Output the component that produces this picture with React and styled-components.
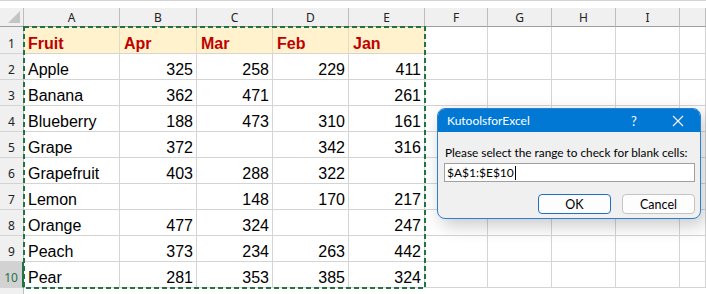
import React from "react";
import styled, { createGlobalStyle } from "styled-components";

const GlobalStyle = createGlobalStyle`
  html, body { margin: 0; padding: 0; background: #fff; }
  body { font-family: "Liberation Sans", Arial, sans-serif; overflow: hidden; }
`;

const COLS = [96, 77, 76, 76, 76, 63, 64, 64, 64];
const LETTERS = ["A", "B", "C", "D", "E", "F", "G", "H", "I"];

const DATA = [
  ["Apple", 325, 258, 229, 411],
  ["Banana", 362, 471, "", 261],
  ["Blueberry", 188, 473, 310, 161],
  ["Grape", 372, "", 342, 316],
  ["Grapefruit", 403, 288, 322, ""],
  ["Lemon", "", 148, 170, 217],
  ["Orange", 477, 324, "", 247],
  ["Peach", 373, 234, 263, 442],
  ["Pear", 281, 353, 385, 324],
];

const Screen = styled.div`
  position: relative;
  width: 706px;
  height: 294px;
  overflow: hidden;
  background: #fff;
`;

const TopStrip = styled.div`
  height: 8px;
  border-top: 1px solid #d4d4d4;
  box-sizing: border-box;
  background: #fff;
`;

const Grid = styled.div`
  position: relative;
  display: grid;
  grid-template-columns: 24px ${COLS.map((w) => w + "px").join(" ")} 1fr;
  grid-template-rows: 19px 27px repeat(9, 26px) 1fr;
  height: 286px;
`;

const Corner = styled.div`
  background: #f0f0f0;
  border-right: 1px solid #bdbdbd;
  border-bottom: 1px solid #9e9e9e;
  box-sizing: border-box;
  position: relative;
  &::after {
    content: "";
    position: absolute;
    right: 3px;
    bottom: 3px;
    border-style: solid;
    border-width: 0 0 12px 12px;
    border-color: transparent transparent #c4c4c4 transparent;
  }
`;

const ColHead = styled.div`
  background: #f0f0f0;
  border-right: 1px solid #bdbdbd;
  border-bottom: 1px solid #9e9e9e;
  box-sizing: border-box;
  display: flex;
  align-items: center;
  justify-content: center;
  font-family: "Noto Sans", "Liberation Sans", sans-serif;
  font-size: 12px;
  color: #222;
`;

const RowHead = styled.div`
  background: ${(p) => (p.$active ? "#d2d2d2" : "#f0f0f0")};
  border-right: ${(p) => (p.$active ? "2px solid #217346" : "1px solid #bdbdbd")};
  border-bottom: 1px solid #d4d4d4;
  box-sizing: border-box;
  display: flex;
  align-items: flex-end;
  justify-content: center;
  padding-bottom: 1px;
  font-family: "Noto Sans", "Liberation Sans", sans-serif;
  font-size: 12px;
  color: ${(p) => (p.$active ? "#217346" : "#222")};
`;

const Cell = styled.div`
  background: ${(p) => (p.$head ? "#fff2cc" : "#fff")};
  border-right: 1px solid ${(p) => (p.$head ? "#e3dcc4" : "#d4d4d4")};
  border-bottom: 1px solid #d4d4d4;
  box-sizing: border-box;
  display: flex;
  align-items: flex-end;
  justify-content: ${(p) => (p.$num ? "flex-end" : "flex-start")};
  padding: 0 3px 0 4px;
  font-size: 16px;
  line-height: 18px;
  font-weight: ${(p) => (p.$head ? 700 : 400)};
  color: ${(p) => (p.$head ? "#c00000" : "#000")};
  white-space: nowrap;
`;

const Blank = styled.div`
  background: ${(p) => (p.$side ? "#f0f0f0" : "#fff")};
  border-right: ${(p) => (p.$side ? "1px solid #bdbdbd" : "none")};
  box-sizing: border-box;
`;

const Ants = styled.svg`
  position: absolute;
  left: 23px;
  top: 18px;
  pointer-events: none;
`;

const Dialog = styled.div`
  position: absolute;
  left: 437px;
  top: 108px;
  width: 264px;
  height: 111px;
  box-sizing: border-box;
  border: 1px solid #2b7fd0;
  border-radius: 8px;
  overflow: hidden;
  background: #f0f0f0;
  box-shadow: 4px 6px 18px rgba(0, 0, 0, 0.22);
  font-family: Lato, "Noto Sans", sans-serif;
  display: flex;
  flex-direction: column;
`;

const TitleBar = styled.div`
  height: 23px;
  flex: none;
  background: #0078d4;
  color: #fff;
  display: flex;
  align-items: center;
  padding: 0 0 0 9px;
  font-size: 12px;
`;

const Title = styled.span`
  flex: 1;
`;

const TitleBtn = styled.span`
  width: 44px;
  display: flex;
  justify-content: center;
  align-items: center;
  font-size: 13px;
`;

const Body = styled.div`
  flex: 1;
  padding: 13px 5px 0 6px;
  display: flex;
  flex-direction: column;
`;

const Label = styled.div`
  font-size: 11.8px;
  color: #000;
  margin-left: 1px;
  line-height: 16px;
  white-space: nowrap;
`;

const Input = styled.div`
  margin-top: 2px;
  height: 19px;
  flex: none;
  box-sizing: border-box;
  background: #fff;
  border: 1px solid #a0a0a0;
  font-size: 12px;
  line-height: 17px;
  padding-left: 2px;
  display: flex;
  align-items: center;
  color: #000;
`;

const Caret = styled.span`
  display: inline-block;
  width: 1px;
  height: 14px;
  background: #000;
  margin-left: 1px;
`;

const Buttons = styled.div`
  display: flex;
  justify-content: flex-end;
  gap: 11px;
  margin-top: 12px;
`;

const Button = styled.div`
  width: 73px;
  height: 20px;
  box-sizing: border-box;
  border-radius: 4px;
  background: #fdfdfd;
  border: ${(p) => (p.$primary ? "1.5px solid #1f6fc5" : "1px solid #c4c4c4")};
  display: flex;
  align-items: center;
  justify-content: center;
  font-size: 12.5px;
  color: #000;
`;

const App = () => {
  const head = ["Fruit", "Apr", "Mar", "Feb", "Jan"];
  const rows = [head, ...DATA];
  return (
    <Screen>
      <GlobalStyle />
      <TopStrip />
      <Grid>
        <Corner />
        {LETTERS.map((l) => (
          <ColHead key={l}>{l}</ColHead>
        ))}
        <ColHead />
        {rows.map((r, i) => (
          <React.Fragment key={i}>
            <RowHead $active={i === 9}>{i + 1}</RowHead>
            {r.map((v, j) => (
              <Cell key={j} $head={i === 0} $num={i > 0 && j > 0}>
                {v}
              </Cell>
            ))}
            {LETTERS.slice(5).map((l) => (
              <Cell key={l} />
            ))}
            <Cell />
          </React.Fragment>
        ))}
        <Blank $side />
        {LETTERS.map((l) => (
          <Blank key={l} />
        ))}
        <Blank />
        <Ants width="404" height="264">
          <rect
            x="1"
            y="1"
            width="401"
            height="261"
            fill="none"
            stroke="#217346"
            strokeWidth="2"
            strokeDasharray="5 3"
          />
        </Ants>
      </Grid>
      <Dialog>
        <TitleBar>
          <Title>KutoolsforExcel</Title>
          <TitleBtn>?</TitleBtn>
          <TitleBtn>
            <svg width="12" height="12" viewBox="0 0 12 12">
              <path d="M1 1L11 11M11 1L1 11" stroke="#fff" strokeWidth="1.1" />
            </svg>
          </TitleBtn>
        </TitleBar>
        <Body>
          <Label>Please select the range to check for blank cells:</Label>
          <Input>
            $A$1:$E$10
            <Caret />
          </Input>
          <Buttons>
            <Button $primary>OK</Button>
            <Button>Cancel</Button>
          </Buttons>
        </Body>
      </Dialog>
    </Screen>
  );
};

export default App;
